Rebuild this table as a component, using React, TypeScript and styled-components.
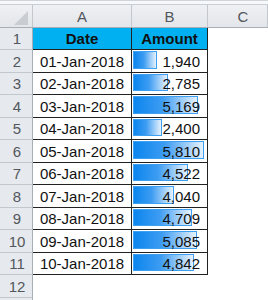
import React from "react";
import styled, { createGlobalStyle } from "styled-components";

const GlobalStyle = createGlobalStyle`
  html, body { margin: 0; padding: 0; background: #ffffff; }
  body { font-family: "Liberation Sans", Arial, sans-serif; }
  * { box-sizing: border-box; }
`;

const COLS = "33px 99px 76px 60px";

const Frame = styled.div`
  width: 268px;
  height: 300px;
  overflow: hidden;
  background: #ffffff;
`;

const TopStrip = styled.div`
  height: 4px;
  border-top: 1px solid #cfd4da;
  background: #f7f8fa;
`;

const HeaderRow = styled.div`
  display: grid;
  grid-template-columns: ${COLS};
  height: 24px;
  border-top: 1px solid #c9ced4;
  border-bottom: 1px solid #a7aeb6;
  background: linear-gradient(#eef0f3, #e3e6ea);
`;

const ColLabel = styled.div<{ $shift?: number }>`
  display: flex;
  align-items: center;
  justify-content: center;
  padding-left: ${(p) => p.$shift ?? 0}px;
  border-right: 1px solid #c3c8ce;
  color: #52575d;
  font-size: 15px;
`;

const Corner = styled.div`
  position: relative;
  border-right: 1px solid #c3c8ce;
  display: flex;
  align-items: flex-end;
  justify-content: flex-end;
  padding: 0 4px 2px 0;
`;

const Row = styled.div<{ $h: number }>`
  display: grid;
  grid-template-columns: ${COLS};
  height: ${(p) => p.$h}px;
`;

const RowHead = styled.div`
  display: flex;
  align-items: center;
  justify-content: center;
  padding-left: 2px;
  background: #e6e9ed;
  border-right: 1px solid #a7aeb6;
  border-bottom: 1px solid #c3c8ce;
  color: #52575d;
  font-size: 15px;
`;

const Cell = styled.div<{ $head?: boolean; $boxed?: boolean; $align?: string }>`
  position: relative;
  display: flex;
  align-items: center;
  justify-content: ${(p) => p.$align ?? "center"};
  padding-right: ${(p) => (p.$align === "flex-end" ? "7px" : "0")};
  background: ${(p) => (p.$head ? "#00b0f0" : "#ffffff")};
  border-right: ${(p) => (p.$boxed ? "1px solid #222" : "none")};
  border-bottom: ${(p) => (p.$boxed ? "1px solid #222" : "none")};
  color: #111;
  font-size: 15px;
  font-weight: ${(p) => (p.$head ? 700 : 400)};
`;

const Bar = styled.div`
  position: absolute;
  left: 1px;
  top: 1px;
  bottom: 3px;
  border: 1px solid #3d9ff2;
  background: linear-gradient(90deg, #0c86ee 0%, #3d9cf2 45%, #a9d3f9 80%, #e6f2fd 100%);
`;

const Value = styled.span`
  position: relative;
`;

const data: [string, string, number][] = [
  ["01-Jan-2018", "1,940", 24],
  ["02-Jan-2018", "2,785", 35],
  ["03-Jan-2018", "5,169", 65],
  ["04-Jan-2018", "2,400", 29],
  ["05-Jan-2018", "5,810", 71],
  ["06-Jan-2018", "4,522", 55],
  ["07-Jan-2018", "4,040", 41],
  ["08-Jan-2018", "4,709", 59],
  ["09-Jan-2018", "5,085", 64],
  ["10-Jan-2018", "4,842", 61],
];

const heightOf = (n: number) => (n % 2 === 1 ? 22 : 23);

export default function App() {
  return (
    <>
      <GlobalStyle />
      <Frame>
        <TopStrip />
        <HeaderRow>
          <Corner>
            <svg width="14" height="14" viewBox="0 0 14 14">
              <polygon points="14,0 14,14 0,14" fill="#c9cdd2" />
            </svg>
          </Corner>
          <ColLabel>A</ColLabel>
          <ColLabel>B</ColLabel>
          <ColLabel $shift={11}>C</ColLabel>
        </HeaderRow>
        <Row $h={heightOf(1)}>
          <RowHead>1</RowHead>
          <Cell $head $boxed>Date</Cell>
          <Cell $head $boxed>Amount</Cell>
          <Cell />
        </Row>
        {data.map(([date, amount, w], i) => (
          <Row key={date} $h={heightOf(i + 2)}>
            <RowHead>{i + 2}</RowHead>
            <Cell $boxed>{date}</Cell>
            <Cell $boxed $align="flex-end">
              <Bar style={{ width: `${w}px` }} />
              <Value>{amount}</Value>
            </Cell>
            <Cell />
          </Row>
        ))}
        <Row $h={heightOf(12)}>
          <RowHead>12</RowHead>
          <Cell />
          <Cell />
          <Cell />
        </Row>
        <Row $h={10}>
          <RowHead />
          <Cell />
          <Cell />
          <Cell />
        </Row>
      </Frame>
    </>
  );
}
